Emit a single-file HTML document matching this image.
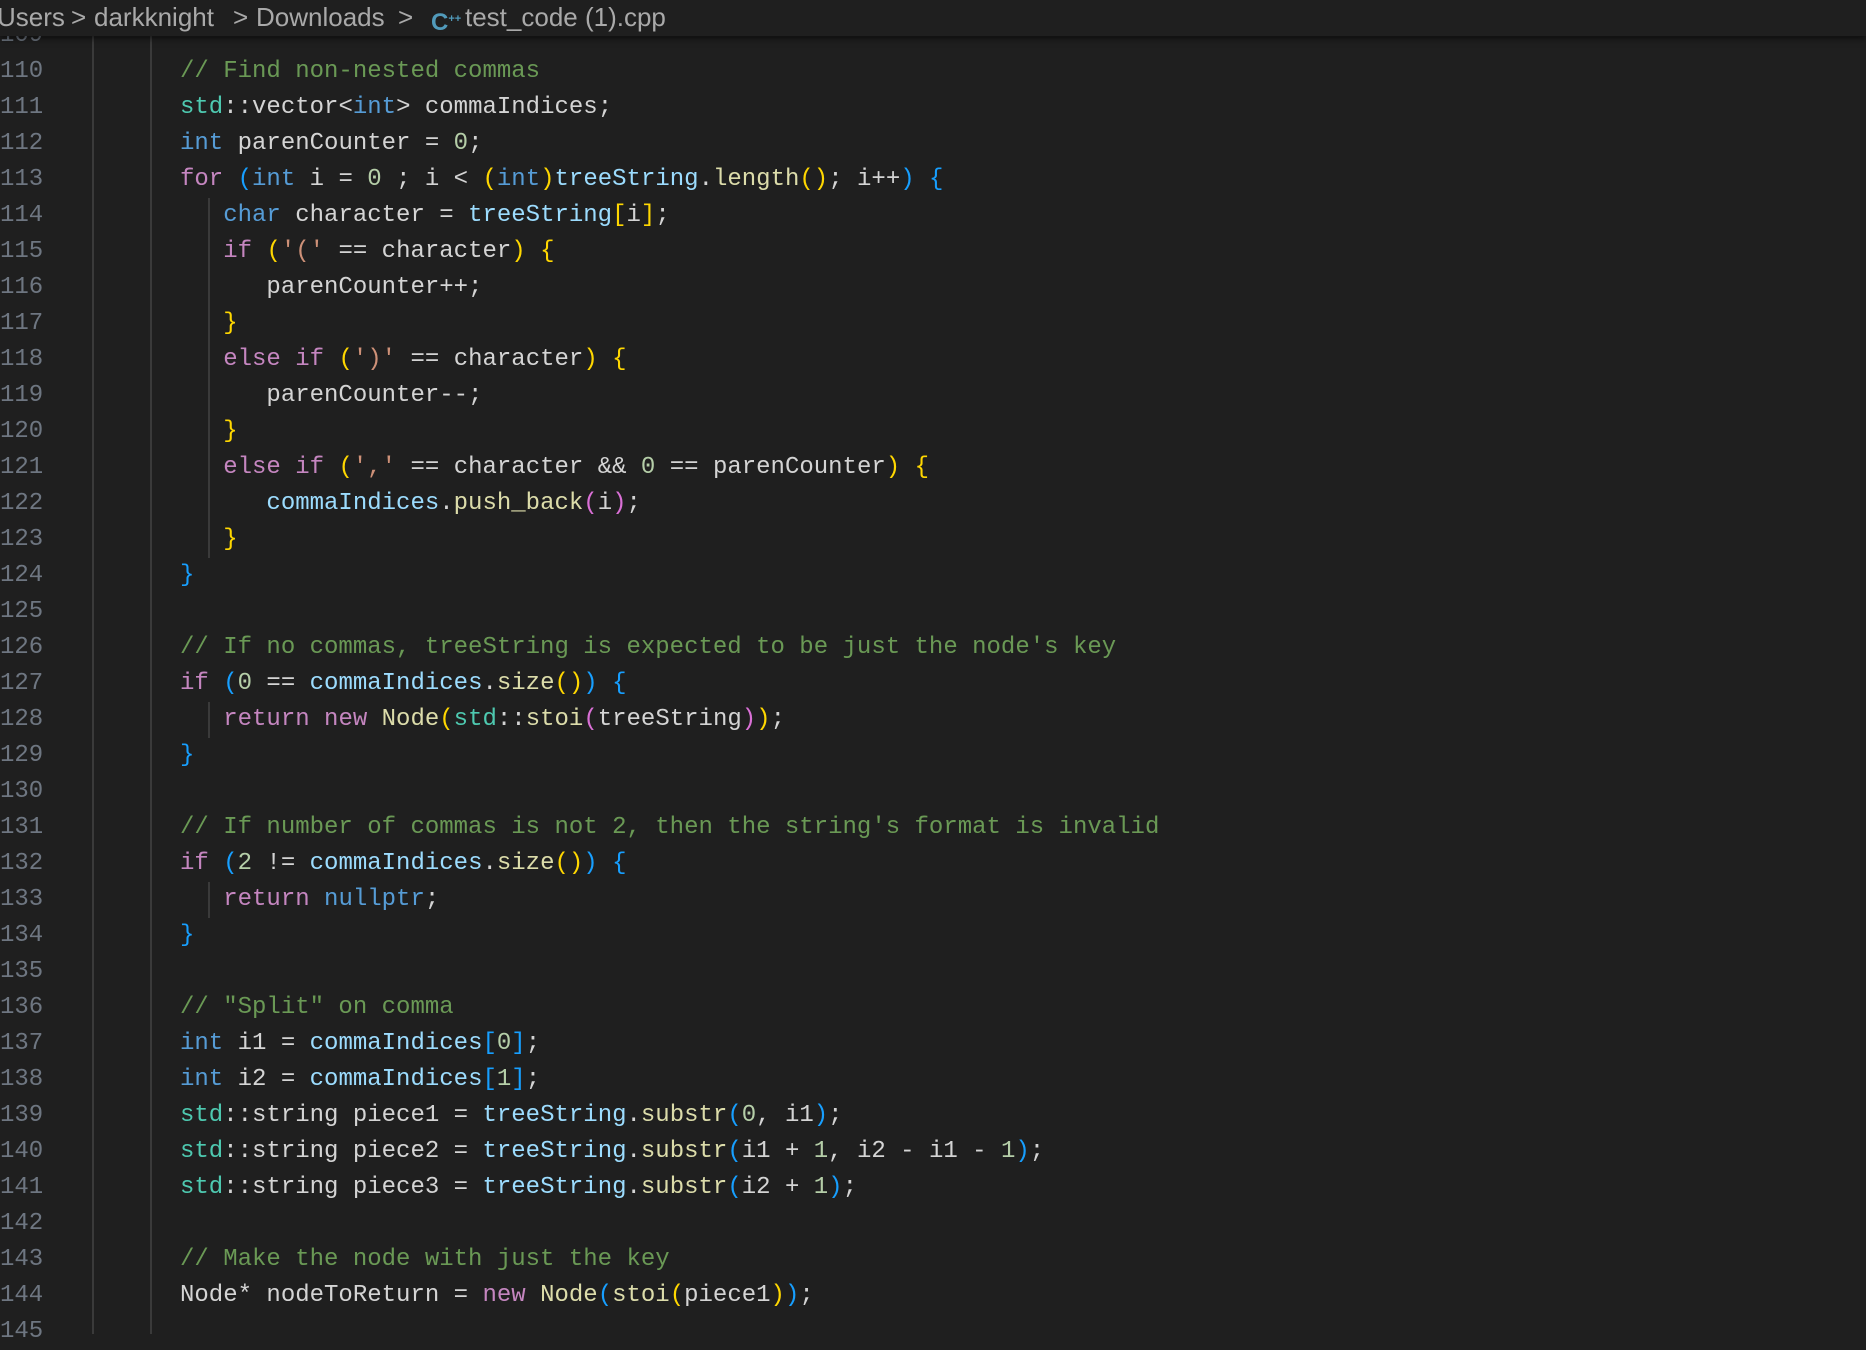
<!DOCTYPE html>
<html><head><meta charset="utf-8"><style>
html,body{margin:0;padding:0;background:#1f1f1f;width:1866px;height:1334px;overflow:hidden;}
#hdr{position:absolute;left:0;top:0;width:1866px;height:36px;background:#1f1f1f;box-shadow:0 3px 6px rgba(0,0,0,.55);z-index:5;font-family:"Liberation Sans",sans-serif;font-size:26px;color:#a9a9a9;}
#hdr span{position:absolute;top:1px;line-height:32px;white-space:nowrap;}
.ln{position:absolute;left:0;width:40px;text-align:right;font-family:"Liberation Mono",monospace;font-size:24px;color:#6e7681;line-height:36px;}
.cl{position:absolute;left:180px;font-family:"Liberation Mono",monospace;font-size:24px;color:#d4d4d4;line-height:36px;white-space:pre;}
.g{position:absolute;width:2px;background:#3a3a3a;}
.c{color:#6a9955}.k{color:#569cd6}.p{color:#c586c0}.v{color:#9cdcfe}.f{color:#dcdcaa}.t{color:#4ec9b0}.n{color:#b5cea8}.s{color:#ce9178}
.b1{color:#ffd700}.b2{color:#da70d6}.b3{color:#179fff}
</style></head><body>
<div id="hdr">
<span style="left:-3px">Users</span><span style="left:71px">&gt;</span>
<span style="left:94px">darkknight</span><span style="left:233px">&gt;</span>
<span style="left:256px">Downloads</span><span style="left:398px">&gt;</span>
<span style="left:431px;top:3px;font-weight:bold;color:#519aba;font-size:24px">C<span style="position:static;font-size:11px;vertical-align:8px">++</span></span>
<span style="left:465px">test_code (1).cpp</span>
</div>
<div class="g" style="left:92px;top:36px;height:1298px"></div>
<div class="g" style="left:150px;top:36px;height:1298px"></div>
<div class="g" style="left:208px;top:198px;height:360px"></div>
<div class="g" style="left:208px;top:702px;height:36px"></div>
<div class="g" style="left:208px;top:882px;height:36px"></div>

<div class="ln" style="top:18px">109</div>
<div class="ln" style="top:54px">110</div><div class="cl" style="top:54px"><span class="c">// Find non-nested commas</span></div>
<div class="ln" style="top:90px">111</div><div class="cl" style="top:90px"><span class="t">std</span>::vector&lt;<span class="k">int</span>&gt; commaIndices;</div>
<div class="ln" style="top:126px">112</div><div class="cl" style="top:126px"><span class="k">int</span> parenCounter = <span class="n">0</span>;</div>
<div class="ln" style="top:162px">113</div><div class="cl" style="top:162px"><span class="p">for</span> <span class="b3">(</span><span class="k">int</span> i = <span class="n">0</span> ; i &lt; <span class="b1">(</span><span class="k">int</span><span class="b1">)</span><span class="v">treeString</span>.<span class="f">length</span><span class="b1">()</span>; i++<span class="b3">)</span> <span class="b3">{</span></div>
<div class="ln" style="top:198px">114</div><div class="cl" style="top:198px">   <span class="k">char</span> character = <span class="v">treeString</span><span class="b1">[</span>i<span class="b1">]</span>;</div>
<div class="ln" style="top:234px">115</div><div class="cl" style="top:234px">   <span class="p">if</span> <span class="b1">(</span><span class="s">'('</span> == character<span class="b1">)</span> <span class="b1">{</span></div>
<div class="ln" style="top:270px">116</div><div class="cl" style="top:270px">      parenCounter++;</div>
<div class="ln" style="top:306px">117</div><div class="cl" style="top:306px">   <span class="b1">}</span></div>
<div class="ln" style="top:342px">118</div><div class="cl" style="top:342px">   <span class="p">else if</span> <span class="b1">(</span><span class="s">')'</span> == character<span class="b1">)</span> <span class="b1">{</span></div>
<div class="ln" style="top:378px">119</div><div class="cl" style="top:378px">      parenCounter--;</div>
<div class="ln" style="top:414px">120</div><div class="cl" style="top:414px">   <span class="b1">}</span></div>
<div class="ln" style="top:450px">121</div><div class="cl" style="top:450px">   <span class="p">else if</span> <span class="b1">(</span><span class="s">','</span> == character &amp;&amp; <span class="n">0</span> == parenCounter<span class="b1">)</span> <span class="b1">{</span></div>
<div class="ln" style="top:486px">122</div><div class="cl" style="top:486px">      <span class="v">commaIndices</span>.<span class="f">push_back</span><span class="b2">(</span>i<span class="b2">)</span>;</div>
<div class="ln" style="top:522px">123</div><div class="cl" style="top:522px">   <span class="b1">}</span></div>
<div class="ln" style="top:558px">124</div><div class="cl" style="top:558px"><span class="b3">}</span></div>
<div class="ln" style="top:594px">125</div>
<div class="ln" style="top:630px">126</div><div class="cl" style="top:630px"><span class="c">// If no commas, treeString is expected to be just the node's key</span></div>
<div class="ln" style="top:666px">127</div><div class="cl" style="top:666px"><span class="p">if</span> <span class="b3">(</span><span class="n">0</span> == <span class="v">commaIndices</span>.<span class="f">size</span><span class="b1">()</span><span class="b3">)</span> <span class="b3">{</span></div>
<div class="ln" style="top:702px">128</div><div class="cl" style="top:702px">   <span class="p">return new</span> <span class="f">Node</span><span class="b1">(</span><span class="t">std</span>::<span class="f">stoi</span><span class="b2">(</span>treeString<span class="b2">)</span><span class="b1">)</span>;</div>
<div class="ln" style="top:738px">129</div><div class="cl" style="top:738px"><span class="b3">}</span></div>
<div class="ln" style="top:774px">130</div>
<div class="ln" style="top:810px">131</div><div class="cl" style="top:810px"><span class="c">// If number of commas is not 2, then the string's format is invalid</span></div>
<div class="ln" style="top:846px">132</div><div class="cl" style="top:846px"><span class="p">if</span> <span class="b3">(</span><span class="n">2</span> != <span class="v">commaIndices</span>.<span class="f">size</span><span class="b1">()</span><span class="b3">)</span> <span class="b3">{</span></div>
<div class="ln" style="top:882px">133</div><div class="cl" style="top:882px">   <span class="p">return</span> <span class="k">nullptr</span>;</div>
<div class="ln" style="top:918px">134</div><div class="cl" style="top:918px"><span class="b3">}</span></div>
<div class="ln" style="top:954px">135</div>
<div class="ln" style="top:990px">136</div><div class="cl" style="top:990px"><span class="c">// "Split" on comma</span></div>
<div class="ln" style="top:1026px">137</div><div class="cl" style="top:1026px"><span class="k">int</span> i1 = <span class="v">commaIndices</span><span class="b3">[</span><span class="n">0</span><span class="b3">]</span>;</div>
<div class="ln" style="top:1062px">138</div><div class="cl" style="top:1062px"><span class="k">int</span> i2 = <span class="v">commaIndices</span><span class="b3">[</span><span class="n">1</span><span class="b3">]</span>;</div>
<div class="ln" style="top:1098px">139</div><div class="cl" style="top:1098px"><span class="t">std</span>::string piece1 = <span class="v">treeString</span>.<span class="f">substr</span><span class="b3">(</span><span class="n">0</span>, i1<span class="b3">)</span>;</div>
<div class="ln" style="top:1134px">140</div><div class="cl" style="top:1134px"><span class="t">std</span>::string piece2 = <span class="v">treeString</span>.<span class="f">substr</span><span class="b3">(</span>i1 + <span class="n">1</span>, i2 - i1 - <span class="n">1</span><span class="b3">)</span>;</div>
<div class="ln" style="top:1170px">141</div><div class="cl" style="top:1170px"><span class="t">std</span>::string piece3 = <span class="v">treeString</span>.<span class="f">substr</span><span class="b3">(</span>i2 + <span class="n">1</span><span class="b3">)</span>;</div>
<div class="ln" style="top:1206px">142</div>
<div class="ln" style="top:1242px">143</div><div class="cl" style="top:1242px"><span class="c">// Make the node with just the key</span></div>
<div class="ln" style="top:1278px">144</div><div class="cl" style="top:1278px">Node* nodeToReturn = <span class="p">new</span> <span class="f">Node</span><span class="b3">(</span><span class="f">stoi</span><span class="b1">(</span>piece1<span class="b1">)</span><span class="b3">)</span>;</div>
<div class="ln" style="top:1314px">145</div>
</body></html>
